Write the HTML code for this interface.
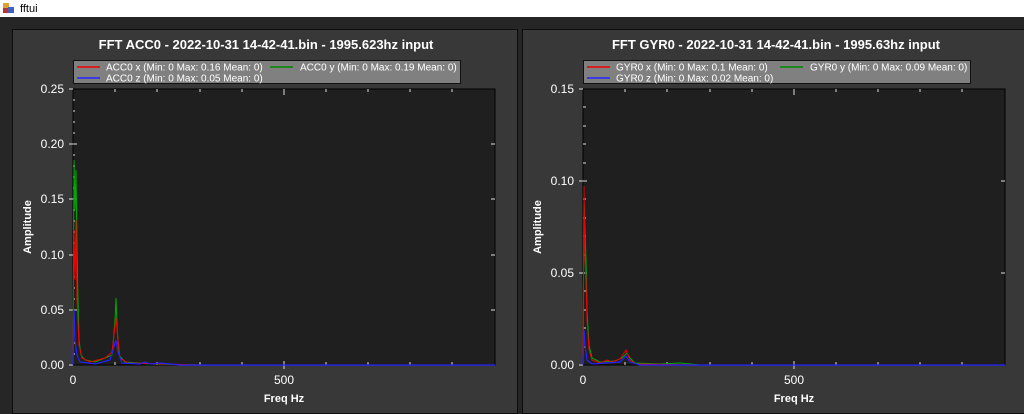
<!DOCTYPE html>
<html><head><meta charset="utf-8"><style>
html,body{margin:0;padding:0;width:1024px;height:414px;overflow:hidden;background:#252525;font-family:"Liberation Sans",Arial,sans-serif}
</style></head><body>
<svg width="1024" height="414" xmlns="http://www.w3.org/2000/svg" font-family="Liberation Sans, Arial, sans-serif">
<rect x="0" y="0" width="1024" height="17" fill="#fff"/>
<rect x="3" y="3" width="6" height="6" fill="#e0a030"/><rect x="8" y="7" width="6" height="6" fill="#4060c0"/><rect x="3" y="8" width="5" height="5" fill="#c03030"/>
<text x="20" y="12" font-size="11" fill="#000">fftui</text>
<rect x="0" y="17" width="1024" height="397" fill="#262626"/>
<!-- left panel -->
<rect x="12.5" y="29.5" width="505" height="384" fill="#383838" stroke="#0d0d0d"/>
<text x="266" y="49" font-size="13" font-weight="bold" fill="#fff" text-anchor="middle">FFT ACC0 - 2022-10-31 14-42-41.bin - 1995.623hz input</text>
<rect x="73.5" y="60.5" width="387" height="23" fill="#808080" stroke="#111"/>
<line x1="77" y1="67" x2="100" y2="67" stroke="#e00" stroke-width="1.5"/>
<text x="106" y="70.5" font-size="10" fill="#fff">ACC0 x (Min: 0 Max: 0.16 Mean: 0)</text>
<line x1="270" y1="67" x2="293" y2="67" stroke="#080" stroke-width="1.5"/>
<text x="300" y="70.5" font-size="10" fill="#fff">ACC0 y (Min: 0 Max: 0.19 Mean: 0)</text>
<line x1="77" y1="78" x2="100" y2="78" stroke="#22f" stroke-width="1.5"/>
<text x="106" y="81.5" font-size="10" fill="#fff">ACC0 z (Min: 0 Max: 0.05 Mean: 0)</text>
<rect x="73" y="89" width="422" height="276" fill="#1f1f1f" stroke="#000"/>
<g font-size="12" fill="#fff" text-anchor="end">
<text x="64" y="93">0.25</text><text x="64" y="148">0.20</text><text x="64" y="203">0.15</text><text x="64" y="259">0.10</text><text x="64" y="314">0.05</text><text x="64" y="369">0.00</text>
</g>
<g stroke="#ddd" stroke-width="1">
<path d="M69 89h4M69 144h8M69 199h8M69 255h8M69 310h8M69 365h4M491 144h4M491 199h4M491 255h4M491 310h4"/>
<path d="M73 100h2M73 111h2M73 122h2M73 133h2M73 155h2M73 166h2M73 177h2M73 188h2M73 210h2M73 221h2M73 232h2M73 243h2M73 266h2M73 277h2M73 288h2M73 299h2M73 321h2M73 332h2M73 343h2M73 354h2"/>
<path d="M115 365v-3M157 365v-3M200 365v-3M242 365v-3M284 369v-8M326 365v-3M368 365v-3M410 365v-3M452 365v-3M115 89v3M157 89v3M200 89v3M242 89v3M284 89v6M326 89v3M368 89v3M410 89v3M452 89v3"/>
</g>
<text x="73" y="384" font-size="12" fill="#fff" text-anchor="middle">0</text>
<text x="284" y="384" font-size="12" fill="#fff" text-anchor="middle">500</text>
<text x="284" y="402" font-size="11" font-weight="bold" fill="#fff" text-anchor="middle">Freq Hz</text>
<text transform="translate(31,227) rotate(-90)" font-size="11" font-weight="bold" fill="#fff" text-anchor="middle">Amplitude</text>
<polyline fill="none" stroke="#0a0" stroke-width="1" points="73,365 74,160 75,210 76,170 77,250 78,300 79,340 81,355 85,360 95,362 105,358 112,355 113,345 115,320 116,298 117,325 119,355 125,362 150,364 200,365 495,365"/>
<polyline fill="none" stroke="#e00" stroke-width="1" points="73,365 74,230 75,280 76,220 77,300 79,345 82,358 90,362 105,358 112,352 114,335 116,318 118,340 120,358 128,363 200,365 495,365"/>
<polyline fill="none" stroke="#22f" stroke-width="1.2" points="73,365 74,310 75,340 77,355 80,362 95,364 110,360 113,350 116,340 118,352 122,363 140,364 145,362 150,364 160,363 180,365 495,365"/>
<!-- right panel -->
<rect x="522.5" y="29.5" width="510" height="384" fill="#383838" stroke="#0d0d0d"/>
<text x="776" y="49" font-size="13" font-weight="bold" fill="#fff" text-anchor="middle">FFT GYR0 - 2022-10-31 14-42-41.bin - 1995.63hz input</text>
<rect x="583.5" y="60.5" width="387" height="23" fill="#808080" stroke="#111"/>
<line x1="587" y1="67" x2="610" y2="67" stroke="#e00" stroke-width="1.5"/>
<text x="616" y="70.5" font-size="10" fill="#fff">GYR0 x (Min: 0 Max: 0.1 Mean: 0)</text>
<line x1="780" y1="67" x2="803" y2="67" stroke="#080" stroke-width="1.5"/>
<text x="810" y="70.5" font-size="10" fill="#fff">GYR0 y (Min: 0 Max: 0.09 Mean: 0)</text>
<line x1="587" y1="78" x2="610" y2="78" stroke="#22f" stroke-width="1.5"/>
<text x="616" y="81.5" font-size="10" fill="#fff">GYR0 z (Min: 0 Max: 0.02 Mean: 0)</text>
<rect x="583" y="89" width="422" height="276" fill="#1f1f1f" stroke="#000"/>
<g font-size="12" fill="#fff" text-anchor="end">
<text x="574" y="93">0.15</text><text x="574" y="185">0.10</text><text x="574" y="277">0.05</text><text x="574" y="369">0.00</text>
</g>
<g stroke="#ddd" stroke-width="1">
<path d="M579 89h4M579 181h8M579 273h8M579 365h4M1001 181h4M1001 273h4M583 107h3M583 126h3M583 144h3M583 163h3M583 199h3M583 218h3M583 236h3M583 255h3M583 291h3M583 310h3M583 328h3M583 347h3"/>
<path d="M625 365v-3M667 365v-3M710 365v-3M752 365v-3M794 369v-8M836 365v-3M878 365v-3M920 365v-3M962 365v-3M625 89v3M667 89v3M710 89v3M752 89v3M794 89v6M836 89v3M878 89v3M920 89v3M962 89v3"/>
</g>
<text x="583" y="384" font-size="12" fill="#fff" text-anchor="middle">0</text>
<text x="794" y="384" font-size="12" fill="#fff" text-anchor="middle">500</text>
<text x="794" y="402" font-size="11" font-weight="bold" fill="#fff" text-anchor="middle">Freq Hz</text>
<text transform="translate(541,227) rotate(-90)" font-size="11" font-weight="bold" fill="#fff" text-anchor="middle">Amplitude</text>
<polyline fill="none" stroke="#0a0" stroke-width="1" points="583,365 584,200 585,230 586,260 587,310 589,345 592,358 600,362 615,361 622,358 627,353 630,358 635,363 660,364 680,363 700,365 1005,365"/>
<polyline fill="none" stroke="#e00" stroke-width="1" points="583,365 584,186 585,260 586,280 587,320 589,350 592,360 600,363 607,360 612,362 620,359 626,350 630,360 636,364 700,365 1005,365"/>
<polyline fill="none" stroke="#22f" stroke-width="1.2" points="583,365 584,330 585,345 587,360 592,364 620,362 626,356 630,362 640,365 1005,365"/>
</svg>
</body></html>
